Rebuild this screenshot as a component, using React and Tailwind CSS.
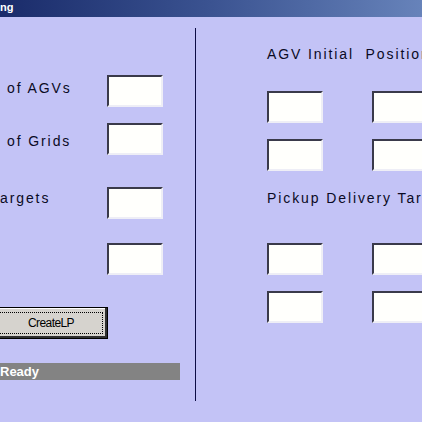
import React from 'react';

const font = { fontFamily: '"Liberation Sans", Arial, sans-serif' };

// sunken win32 edit box
const Box = ({ className = '' }) => (
  <div
    className={`w-[56px] h-[32px] shrink-0 bg-[#fffffc] border-2 border-t-[#3a3a4a] border-l-[#3a3a4a] border-b-[#eeeef6] border-r-[#eeeef6] ${className}`}
  />
);

const Label = ({ children, className = '' }) => (
  <div className={`text-[14px] leading-4 tracking-[1.9px] text-[#0a0a24] whitespace-pre ${className}`}>
    {children}
  </div>
);

export default function App() {
  return (
    <div className="w-[422px] h-[422px] overflow-hidden bg-[#c3c3f6] flex flex-col" style={font}>
      {/* title bar */}
      <div className="h-[17px] shrink-0 bg-gradient-to-r from-[#1a2b6a] via-[#3b5391] to-[#6783ba] flex items-start pt-[1px]">
        <span className="text-white font-bold text-[11px] leading-[12px]">ng</span>
      </div>

      <div className="flex flex-1 min-h-0">
        {/* left panel */}
        <div className="w-[195px] shrink-0 flex flex-col pt-[58px]">
          <div className="flex h-[32px]">
            <Label className="w-[107px] pl-[7px] mt-[5px]">of AGVs</Label>
            <Box />
          </div>
          <div className="flex h-[32px] mt-[16px]">
            <Label className="w-[107px] pl-[7px] mt-[10px]">of Grids</Label>
            <Box />
          </div>
          <div className="flex h-[32px] mt-[32px]">
            <Label className="w-[107px] mt-[3px]">argets</Label>
            <Box />
          </div>
          <div className="flex h-[32px] mt-[24px]">
            <div className="w-[107px]" />
            <Box />
          </div>

          <button className="mt-[32px] -ml-[6px] w-[114px] h-[32px] bg-[#d6d3ce] border border-black shadow-[inset_-2px_-2px_0_#303030,inset_1px_1px_0_#ffffff] p-[4px] flex">
            <span className="flex-1 h-full border border-dotted border-black flex items-center justify-center text-[12px] tracking-[-0.6px] text-black">
              CreateLP
            </span>
          </button>

          <div className="mt-[24px] w-[180px] h-[17px] bg-[#838383] flex items-center">
            <span className="text-white font-bold text-[13px] leading-4">Ready</span>
          </div>
        </div>

        {/* divider */}
        <div className="w-px shrink-0 bg-[#0c0c44] mt-[11px] mb-[21px]" />

        {/* right panel */}
        <div className="flex-1 min-w-0 flex flex-col pl-[71px] pt-[29px]">
          <Label>AGV Initial  Position</Label>
          <div className="flex gap-[49px] mt-[29px]">
            <Box />
            <Box />
          </div>
          <div className="flex gap-[49px] mt-[16px]">
            <Box />
            <Box />
          </div>
          <Label className="mt-[19px]">Pickup Delivery Targets</Label>
          <div className="flex gap-[49px] mt-[37px]">
            <Box />
            <Box />
          </div>
          <div className="flex gap-[49px] mt-[16px]">
            <Box />
            <Box />
          </div>
        </div>
      </div>
    </div>
  );
}
